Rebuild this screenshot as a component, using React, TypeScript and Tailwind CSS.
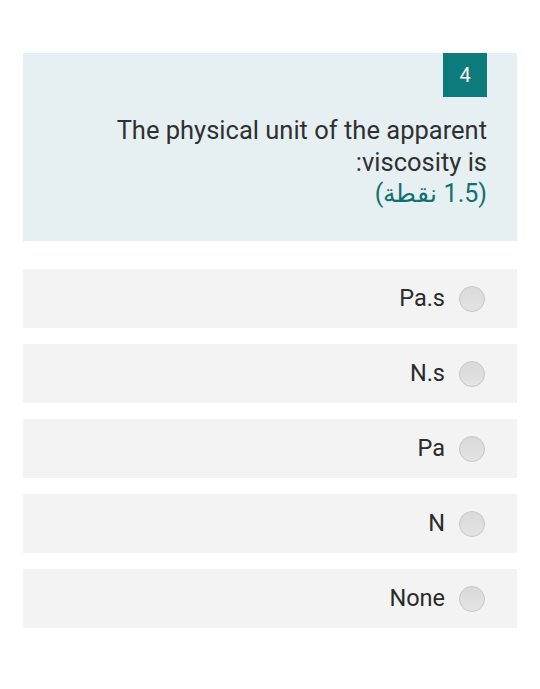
import React from 'react';

const options = ['Pa.s', 'N.s', 'Pa', 'N', 'None'];

export default function App() {
  return (
    <div
      dir="rtl"
      className="min-h-screen bg-white px-[23px] pt-[53px]"
      style={{ fontFamily: 'Roboto, "Noto Sans", Arial, sans-serif' }}
    >
      <div className="bg-[#e6f0f3] pl-6 pr-[30px] pb-[31px]">
        <div className="flex">
          <div className="flex h-[44px] w-[44px] items-center justify-center bg-[#0c7b7b] text-[20px] text-white">
            4
          </div>
        </div>
        <div className="mt-[17px] text-[25.5px] leading-[32px] text-[#303030]">
          The physical unit of the apparent viscosity is:
        </div>
        <div className="text-[25px] leading-[32px] text-[#10706f]">(1.5 نقطة)</div>
      </div>

      <div className="mt-[28px] flex flex-col gap-4">
        {options.map(o => (
          <label key={o} className="flex h-[59px] items-center gap-[14px] bg-[#f3f3f3] pr-[32px]">
            <span className="h-[26px] w-[26px] rounded-full border border-[#c6c6c6] bg-gradient-to-b from-[#d9d9d9] to-[#e4e4e4]" />
            <span className="text-[23.5px] text-[#2a2a2a]">{o}</span>
          </label>
        ))}
      </div>
    </div>
  );
}
